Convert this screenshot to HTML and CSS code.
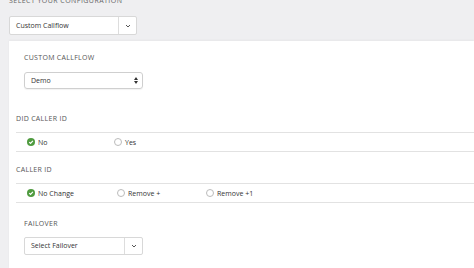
FILE: index.html
```
<!DOCTYPE html>
<html lang="en">
<head>
  <meta charset="UTF-8" />
  <title>Configuration</title>
  <link rel="stylesheet" href="styles.css">
</head>
<body>
  <div class="top">
    <div class="top-title">SELECT YOUR CONFIGURATION</div>
    <div class="dropdown wide">
      <span class="dd-text">Custom Callflow</span>
      <span class="dd-btn"><svg width="6" height="4" viewBox="0 0 6 4"><path d="M1 1 L3 3 L5 1" fill="none" stroke="#555" stroke-width="1"/></svg></span>
    </div>
  </div>

  <div class="panel">
    <div class="block">
      <div class="label">CUSTOM CALLFLOW</div>
      <div class="native-select">
        <span>Demo</span>
        <svg width="4" height="7" viewBox="0 0 4 7"><path d="M0 3 L2 0 L4 3 Z M0 4 L2 7 L4 4 Z" fill="#333"/></svg>
      </div>
    </div>

    <div class="group">
      <div class="label">DID CALLER ID</div>
      <div class="options">
        <label class="opt w87"><span class="check"><svg width="8" height="8" viewBox="0 0 8 8"><circle cx="4" cy="4" r="4" fill="#4f9b3f"/><path d="M2.2 4.1 L3.5 5.3 L5.9 2.8" fill="none" stroke="#fff" stroke-width="1.2"/></svg></span>No</label>
        <label class="opt"><span class="radio"></span>Yes</label>
      </div>
    </div>

    <div class="group">
      <div class="label">CALLER ID</div>
      <div class="options">
        <label class="opt w90"><span class="check"><svg width="8" height="8" viewBox="0 0 8 8"><circle cx="4" cy="4" r="4" fill="#4f9b3f"/><path d="M2.2 4.1 L3.5 5.3 L5.9 2.8" fill="none" stroke="#fff" stroke-width="1.2"/></svg></span>No Change</label>
        <label class="opt w89"><span class="radio"></span>Remove +</label>
        <label class="opt"><span class="radio"></span>Remove +1</label>
      </div>
    </div>

    <div class="block failover">
      <div class="label">FAILOVER</div>
      <div class="dropdown">
        <span class="dd-text">Select Failover</span>
        <span class="dd-btn"><svg width="6" height="4" viewBox="0 0 6 4"><path d="M1 1 L3 3 L5 1" fill="none" stroke="#555" stroke-width="1"/></svg></span>
      </div>
    </div>
  </div>
</body>
</html>
```

FILE: styles.css
```
body {
  margin: 0;
  background: #efeff1;
  font-family: "Open Sans", Arial, sans-serif;
  font-size: 7px;
  color: #333;
  height: 268px;
  overflow: hidden;
}
.top {
  display: flow-root;
  height: 41px;
  padding: 0 9px;
  box-sizing: border-box;
}
.top-title {
  margin-top: -4px;
  height: 12px;
  line-height: 10px;
  color: #666;
  letter-spacing: 0.45px;
  font-size: 7px;
}
.dropdown {
  display: flex;
  width: 119px;
  height: 18px;
  background: #fff;
  border: 1px solid #d8d8d8;
  border-radius: 2px;
  box-sizing: border-box;
  margin-top: 8px;
}
.dropdown.wide {
  width: 128px;
  height: 19px;
  margin-top: 8px;
}
.dd-text {
  flex: 1;
  padding-left: 6px;
  line-height: 16px;
  color: #333;
}
.dropdown.wide .dd-text {
  line-height: 17px;
}
.dd-btn {
  width: 17px;
  border-left: 1px solid #ddd;
  display: flex;
  align-items: center;
  justify-content: center;
}
.panel {
  margin-left: 9px;
  background: #fff;
  height: 227px;
  padding-top: 12px;
  box-sizing: border-box;
  box-shadow: 0 -1px 2px rgba(0,0,0,0.04);
}
.label {
  color: #555;
  letter-spacing: 0.3px;
  line-height: 10px;
  font-size: 7px;
}
.block {
  padding-left: 15px;
}
.native-select {
  margin-top: 9px;
  width: 119px;
  height: 17px;
  box-sizing: border-box;
  border: 1px solid #cfcfcf;
  border-radius: 3px;
  display: flex;
  align-items: center;
  justify-content: space-between;
  padding: 0 4px 0 6px;
  box-shadow: 0 1px 1px rgba(0,0,0,0.05);
}
.group {
  padding-left: 7px;
  margin-top: 25px;
}
.group + .group {
  margin-top: 13px;
}
.group .label {
  margin-bottom: 8px;
}
.options {
  display: flex;
  border-top: 1px solid #e2e2e2;
  border-bottom: 1px solid #e2e2e2;
  height: 18px;
  align-items: center;
  padding-left: 11px;
}
.opt {
  display: flex;
  align-items: center;
  color: #333;
}
.w87 { width: 87px; }
.w90 { width: 90px; }
.w89 { width: 89px; }
.check, .radio {
  width: 8px;
  height: 8px;
  margin-right: 3px;
  display: inline-flex;
}
.radio {
  box-sizing: border-box;
  border: 1px solid #bbb;
  border-radius: 50%;
}
.failover {
  margin-top: 16px;
}
.failover .dropdown {
  margin-top: 8px;
}
```
